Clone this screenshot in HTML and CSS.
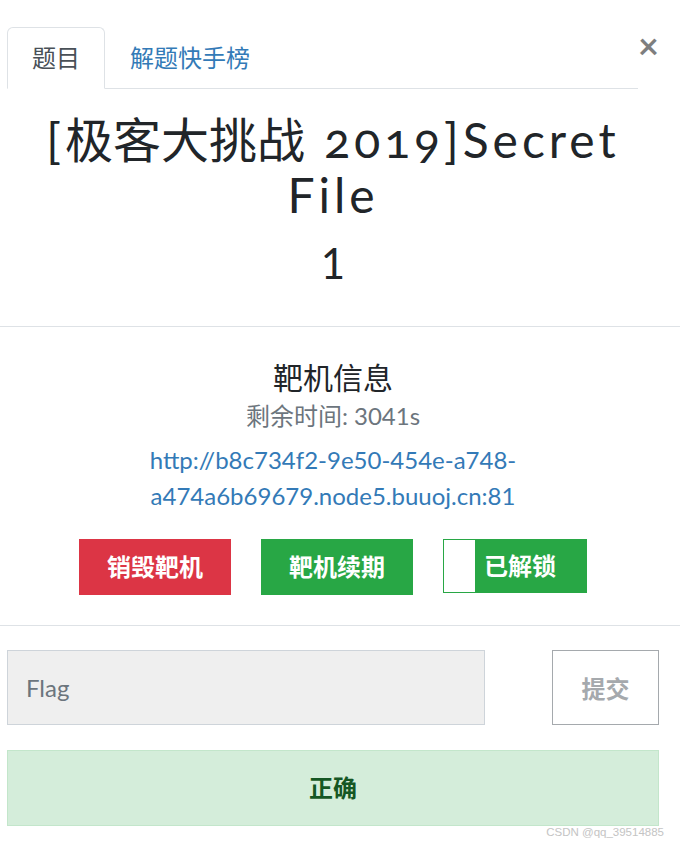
FILE: index.html
```
<!DOCTYPE html>
<html lang="zh-CN">
<head>
<meta charset="utf-8">
<title>[极客大挑战 2019]Secret File</title>
<link rel="stylesheet" href="styles.css">
</head>
<body>
<div class="modal">
  <header class="modal-head">
    <ul class="nav-tabs">
      <li class="nav-item active">题目</li>
      <li class="nav-item"><a class="nav-link" href="#">解题快手榜</a></li>
    </ul>
    <button class="close" type="button">×</button>
  </header>

  <h2 class="challenge-name"><span class="latin">[</span>极客大挑战<span class="latin"> <span class="oldstyle">2019</span>]Secret</span><br><span class="latin">File</span></h2>
  <h3 class="challenge-value">1</h3>

  <hr class="divider">

  <section class="target">
    <h5 class="target-title">靶机信息</h5>
    <p class="target-time">剩余时间: 3041s</p>
    <a class="target-url" href="#">http://b8c734f2-9e50-454e-a748-<br>a474a6b69679.node5.buuoj.cn:81</a>
    <div class="target-actions">
      <button class="btn btn-danger" type="button">销毁靶机</button>
      <button class="btn btn-success" type="button">靶机续期</button>
      <button class="btn btn-lock" type="button"><span class="lock-knob"></span><span class="lock-label">已解锁</span></button>
    </div>
  </section>

  <hr class="divider">

  <section class="flag-form">
    <div class="flag-row">
      <input class="flag-input" type="text" placeholder="Flag">
      <button class="btn-submit" type="button">提交</button>
    </div>
    <div class="alert-success">正确</div>
  </section>

  <div class="watermark">CSDN @qq_39514885</div>
</div>
</body>
</html>
```
FILE: styles.css
```
* { box-sizing: border-box; }

html, body {
  margin: 0;
  padding: 0;
  background: #fff;
}

body {
  font-family: "Lato", "Noto Sans CJK SC", sans-serif;
  font-size: 24px;
  line-height: 1.5;
  color: #212529;
  width: 680px;
  height: 847px;
  overflow: hidden;
  position: relative;
}

.modal {
  width: 680px;
}

/* ---------- header / tabs ---------- */
.modal-head {
  display: flex;
  align-items: flex-start;
  padding: 27px 21px 0 7px;
}

.nav-tabs {
  flex: 1;
  display: flex;
  list-style: none;
  margin: 0;
  padding: 0;
  border-bottom: 1px solid #dee2e6;
}

.nav-item {
  margin-bottom: -1px;
  padding: 12px 24px;
  border: 1px solid transparent;
  border-radius: 6px 6px 0 0;
  font-size: 24px;
  line-height: 36px;
  color: #495057;
}

.nav-item.active {
  background: #fff;
  border-color: #dee2e6 #dee2e6 #fff;
}

.nav-link {
  color: #337ab7;
  text-decoration: none;
}

.close {
  width: 21px;
  padding: 0;
  margin: 0;
  border: 0;
  background: transparent;
  font-family: "Lato", "Liberation Sans", sans-serif;
  font-size: 36px;
  font-weight: 700;
  line-height: 1;
  color: #000;
  opacity: .5;
  text-align: center;
  cursor: pointer;
}

/* ---------- title ---------- */
.challenge-name {
  margin: 0 21px 16px 7px;
  padding-top: 23px;
  text-align: center;
  font-size: 48px;
  font-weight: 400;
  line-height: 55px;
  color: #212529;
}

.latin {
  letter-spacing: 4px;
  word-spacing: 3px;
}

.oldstyle {
  font-variant-numeric: oldstyle-nums;
}

.challenge-value {
  margin: 0 21px 0 7px;
  text-align: center;
  font-size: 42px;
  font-weight: 400;
  line-height: 1.2;
  color: #212529;
}

.divider {
  margin: 38px 0 0;
  border: 0;
  border-top: 1px solid #dee2e6;
  height: 0;
}

/* ---------- target section ---------- */
.target {
  display: flex;
  flex-direction: column;
  align-items: center;
  padding: 0 21px 0 7px;
  text-align: center;
}

.target-title {
  margin: 32px 0 3px;
  font-size: 30px;
  font-weight: 400;
  line-height: 1.2;
  color: #212529;
}

.target-time {
  margin: 0 0 8px;
  color: #6c757d;
}

.target-url {
  color: #337ab7;
  text-decoration: none;
}

.target-actions {
  display: flex;
  align-items: flex-start;
  justify-content: center;
  gap: 30px;
  margin-top: 25px;
  margin-bottom: 30px;
}

.btn {
  font-family: "Lato", "Noto Sans CJK SC", sans-serif;
  font-size: 24px;
  font-weight: 700;
  line-height: 36px;
  color: #fff;
  border: 1px solid transparent;
  border-radius: 0;
  padding: 9px 27px;
  cursor: pointer;
}

.btn-danger {
  background: #dc3545;
  border-color: #dc3545;
  width: 152px;
}

.btn-success {
  background: #28a745;
  border-color: #28a745;
  width: 152px;
}

.btn-lock {
  display: flex;
  padding: 0;
  height: 54px;
  width: 144px;
  background: #28a745;
  border-color: #28a745;
}

.lock-knob {
  width: 31px;
  height: 100%;
  background: #fff;
}

.lock-label {
  padding: 0 0 0 9px;
  line-height: 52px;
}

.target + .divider {
  margin-top: 0;
}

/* ---------- flag form ---------- */
.flag-form {
  padding: 24px 21px 0 7px;
}

.flag-row {
  display: flex;
  justify-content: space-between;
}

.flag-input {
  width: 478px;
  height: 75px;
  padding: 0 18px;
  font-family: "Lato", "Noto Sans CJK SC", sans-serif;
  font-size: 24px;
  color: #495057;
  background: #efefef;
  border: 1px solid #ced4da;
  border-radius: 0;
  outline: none;
}

.flag-input::placeholder {
  color: #6c757d;
  opacity: 1;
}

.btn-submit {
  width: 107px;
  height: 75px;
  padding: 0;
  font-family: "Lato", "Noto Sans CJK SC", sans-serif;
  font-size: 24px;
  font-weight: 700;
  color: #a5a9ad;
  background: #fff;
  border: 1px solid #a5a9ad;
  border-radius: 0;
}

.alert-success {
  margin-top: 25px;
  height: 76px;
  display: flex;
  align-items: center;
  justify-content: center;
  font-size: 24px;
  font-weight: 700;
  color: #155724;
  background: #d4edda;
  border: 1px solid #c3e6cb;
}

.watermark {
  position: absolute;
  top: 824px;
  right: 16px;
  font-family: "Liberation Sans", "DejaVu Sans", sans-serif;
  font-size: 11.5px;
  line-height: 16px;
  color: #c4c4c4;
}
```
